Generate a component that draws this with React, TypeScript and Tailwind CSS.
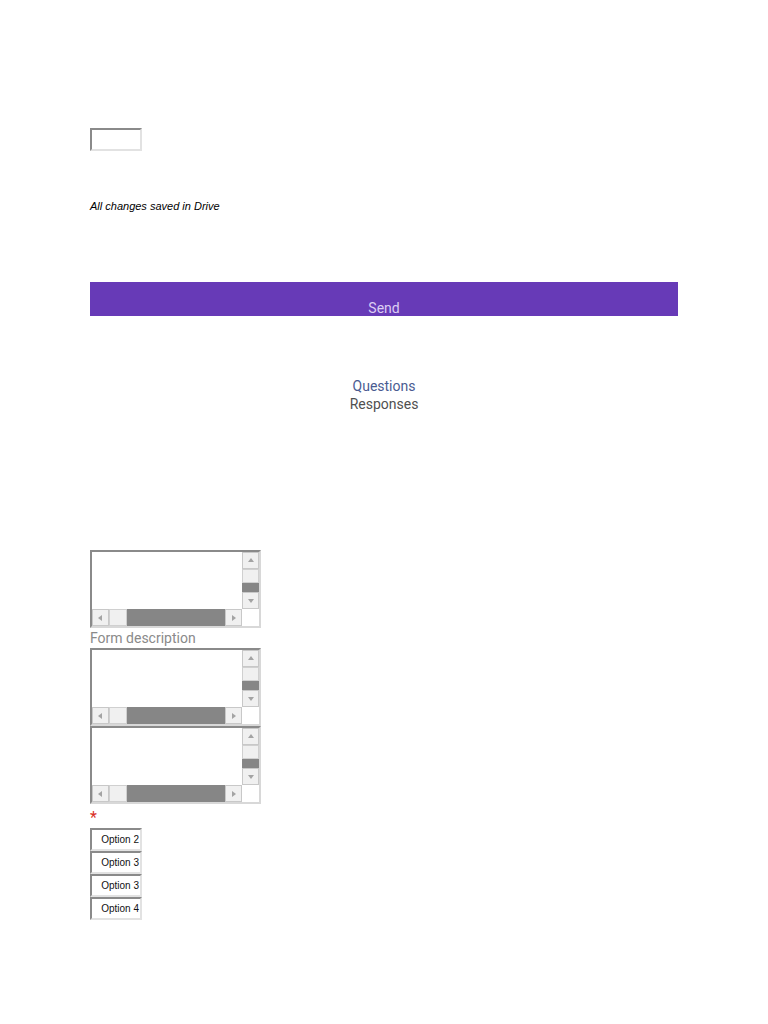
import type { ReactNode } from 'react';

const roboto = "font-['Roboto',sans-serif]";
const arial = "font-['Liberation_Sans',Arial,sans-serif]";

function Arrow({ dir }: { dir: 'up' | 'down' | 'left' | 'right' }) {
  const pts = {
    up: '2,6 5,2 8,6',
    down: '2,3 5,7 8,3',
    left: '6,2 2,5 6,8',
    right: '3,2 7,5 3,8',
  }[dir];
  return (
    <div className="grid h-[17px] w-[17px] shrink-0 place-items-center border border-[#c8c8c8] bg-[#f0f0f0]">
      <svg width="10" height="10" viewBox="0 0 10 10">
        <polygon points={pts} fill="#a3a3a3" />
      </svg>
    </div>
  );
}

function ScrollArea() {
  return (
    <div className="flex h-[78px] w-[171px] flex-col border-2 border-t-[#8a8a8a] border-l-[#8a8a8a] border-r-[#d8d8d8] border-b-[#d8d8d8] bg-white">
      <div className="flex min-h-0 flex-1">
        <div className="flex-1 bg-white" />
        <div className="flex w-[17px] flex-col">
          <Arrow dir="up" />
          <div className="h-[16px] border border-[#d0d0d0] bg-[#f0f0f0]" />
          <div className="h-[11px] bg-[#868686]" />
          <div className="flex-1 bg-[#f0f0f0]" />
          <Arrow dir="down" />
        </div>
      </div>
      <div className="flex h-[17px]">
        <div className="flex flex-1">
          <Arrow dir="left" />
          <div className="w-[18px] border border-[#d0d0d0] bg-[#f0f0f0]" />
          <div className="flex-1 bg-[#868686]" />
          <Arrow dir="right" />
        </div>
        <div className="w-[17px] bg-white" />
      </div>
    </div>
  );
}

function SmallBox({ children }: { children?: ReactNode }) {
  return (
    <div
      className={`flex h-[23px] w-[52px] items-center justify-end border-2 border-t-[#8a8a8a] border-l-[#8a8a8a] border-r-[#e2e2e2] border-b-[#e2e2e2] bg-white pr-[1px] text-[10px] text-[#111] ${arial}`}
    >
      {children}
    </div>
  );
}

export default function App() {
  const options = ['Option 2', 'Option 3', 'Option 3', 'Option 4'];

  return (
    <div className="min-h-[1024px] bg-white pt-[128px] pl-[90px]">
      <SmallBox />

      <p className={`mt-[47px] text-[11px] leading-[16px] text-black italic ${arial}`}>
        All changes saved in Drive
      </p>

      <div className="mt-[68px] h-[34px] w-[588px] overflow-hidden bg-[#673ab7]">
        <div className={`pt-[18px] text-center text-[14px] leading-[16px] text-[#dccdf3] ${roboto}`}>
          Send
        </div>
      </div>

      <div className={`mt-[61px] w-[588px] text-center text-[14px] leading-[18px] ${roboto}`}>
        <div className="text-[#4a5b91]">Questions</div>
        <div className="text-[#505050]">Responses</div>
      </div>

      <div className="mt-[137px]">
        <ScrollArea />
      </div>
      <div className={`h-[20px] text-[14px] leading-[20px] text-[#8a8a8a] ${roboto}`}>
        Form description
      </div>
      <ScrollArea />
      <ScrollArea />

      <div className={`h-[22px] pt-[4px] text-[16px] leading-[20px] text-[#d93025] ${roboto}`}>*</div>

      <div className="mt-[2px] flex flex-col">
        {options.map((o, i) => (
          <SmallBox key={i}>{o}</SmallBox>
        ))}
      </div>
    </div>
  );
}
